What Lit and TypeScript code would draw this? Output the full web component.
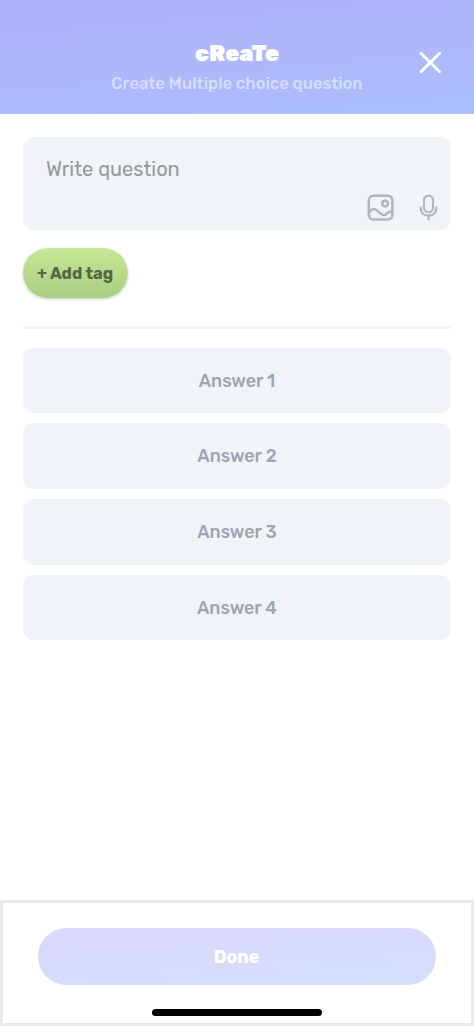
import { LitElement, html, css } from "lit";
import { customElement } from "lit/decorators.js";

@customElement("app-root")
export class AppRoot extends LitElement {
  static styles = css`
    * { box-sizing: border-box; }
    :host {
      display: flex; flex-direction: column; width: 100%; height: 1026px;
      overflow: hidden; background: #fff;
      font-family: Rubik, Roboto, "Noto Sans", sans-serif;
    }
    button { border: 0; font-family: inherit; padding: 0; }
    header {
      height: 113.5px; flex: none; display: grid;
      grid-template-columns: 88px 1fr 88px;
      background: linear-gradient(175deg, #b0b2fb 15%, #abbdfb 90%);
    }
    .titles { grid-column: 2; text-align: center; padding-top: 39px; white-space: nowrap; }
    h1 { margin: 0; font-size: 22.6px; line-height: 29px; font-weight: 900; color: #fff; }
    .sub { font-size: 16.5px; line-height: 31px; font-weight: 500; color: #d5dcfd; }
    .close { background: none; padding: 51px 0 0 33px; display: flex; align-items: flex-start; }
    main { flex: 1; padding: 23.5px 23px 0; display: flex; flex-direction: column; }
    .question {
      height: 93px; border-radius: 11px; background: #f0f3f8; padding: 18px 13px 9px 23px;
      display: flex; flex-direction: column; justify-content: space-between;
    }
    .placeholder { font-size: 20px; line-height: 29px; color: #95999e; }
    .tools { display: flex; justify-content: flex-end; align-items: center; gap: 25px; }
    svg { display: block; }
    .tag {
      margin-top: 18px; width: 105px; height: 50px; border-radius: 25px; align-self: flex-start;
      background: linear-gradient(#c7e896, #a6cf80); box-shadow: 0 1px 3px #b9cbd5;
      color: #596646; font-size: 16.4px; font-weight: 700; white-space: nowrap; padding: 1px 1px 0 0;
    }
    .divider { height: 3px; margin: 27.5px 0 19.2px; background: #f3f4f6; flex: none; }
    .answers { display: grid; grid-auto-rows: 65.3px; gap: 10.5px; }
    .answer {
      border-radius: 11px; background: #f0f3f8; color: #9ca6b4;
      font-size: 17.8px; font-weight: 500; padding-bottom: 0.6px;
    }
    footer {
      height: 126.5px; flex: none; border: 3px solid #e8eaee; border-top-width: 3px;
      padding: 25.5px 35px 0; display: flex; flex-direction: column; align-items: center;
    }
    .done {
      width: 100%; height: 57px; border-radius: 29px; color: #fff; flex: none;
      background: linear-gradient(176deg, #d9d8fd 15%, #d4defb 90%);
      font-size: 17.8px; font-weight: 700; padding: 0 1px 0 0;
    }
    .home { width: 170px; height: 7px; margin-top: 24px; border-radius: 4px; background: #000; flex: none; }
  `;

  render() {
    return html`
      <header>
        <div class="titles">
          <h1>cReaTe</h1>
          <div class="sub">Create Multiple choice question</div>
        </div>
        <button class="close" aria-label="Close">
          <svg width="24" height="24" viewBox="0 0 24 24" fill="none" stroke="#fff" stroke-width="2.7" stroke-linecap="round"><path d="M2 2.2 20.6 20.8M20.6 2.2 2 20.8" /></svg>
        </button>
      </header>
      <main>
        <section class="question">
          <div class="placeholder">Write question</div>
          <div class="tools">
            <svg width="27" height="27" viewBox="0 0 27 27" fill="none" stroke="#b1b5c4" stroke-width="2.5" stroke-linecap="round">
              <rect x="1.8" y="1.8" width="23.6" height="23.6" rx="4.6" />
              <circle cx="18.1" cy="9.6" r="2.8" />
              <path d="M2 18.6C4 15.8 6 14.8 8 15.2C11.4 16 13 21.2 17.2 21.2C19 21.2 20 19.2 21.5 18.2C23 17.3 24.4 17.8 25.2 19" />
            </svg>
            <svg width="19" height="27" viewBox="0 0 19 27" fill="none" stroke="#b1b5c4" stroke-width="2.1" stroke-linecap="round">
              <rect x="5" y="1.6" width="9" height="16.6" rx="4.5" />
              <path d="M1.6 13.2C1.6 18.6 4.6 21.6 9.5 21.6S17.4 18.6 17.4 13.2M9.5 21.8V25.4" />
            </svg>
          </div>
        </section>
        <button class="tag">+ Add tag</button>
        <div class="divider"></div>
        <section class="answers">
          ${[1, 2, 3, 4].map((n) => html`<button class="answer">Answer ${n}</button>`)}
        </section>
      </main>
      <footer>
        <button class="done">Done</button>
        <div class="home"></div>
      </footer>
    `;
  }
}
